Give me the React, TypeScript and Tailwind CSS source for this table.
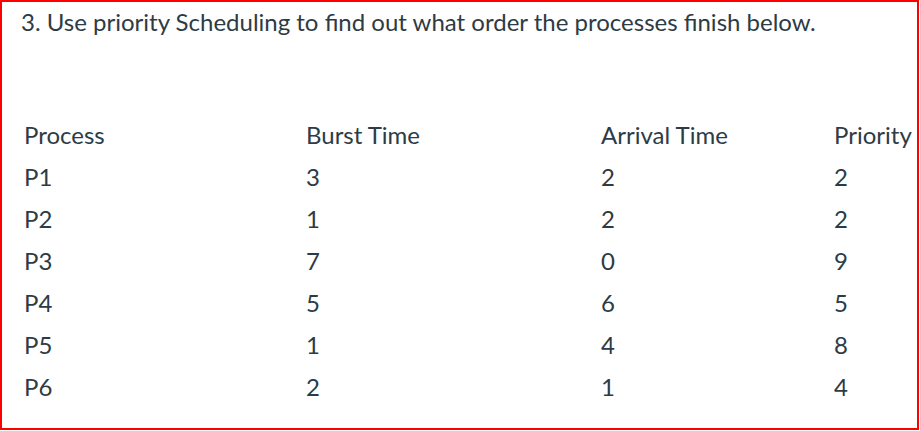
const rows = [
  ['P1', '3', '2', '2'],
  ['P2', '1', '2', '2'],
  ['P3', '7', '0', '9'],
  ['P4', '5', '6', '5'],
  ['P5', '1', '4', '8'],
  ['P6', '2', '1', '4'],
];

export default function App(): JSX.Element {
  return (
    <div className="h-[431px] w-[920px] bg-white font-['Lato',sans-serif] text-[#2d3b45]">
      <div className="h-[430px] w-[919px] border-2 border-[#ff0000] pl-[19px] pt-[5px]">
        <p className="text-[24px] leading-[30px]">
          3. Use priority Scheduling to find out what order the processes finish below.
        </p>

        <div className="mt-[77px] ml-[3px] grid grid-cols-[282px_295px_233px_auto] text-[24px]">
          {['Process', 'Burst Time', 'Arrival Time', 'Priority'].map((h) => (
            <div key={h} className="h-[42px] leading-[42px]">
              {h}
            </div>
          ))}
          {rows.map((r) =>
            r.map((cell, i) => (
              <div key={r[0] + i} className="h-[42px] leading-[42px]">
                {cell}
              </div>
            )),
          )}
        </div>
      </div>
    </div>
  );
}
